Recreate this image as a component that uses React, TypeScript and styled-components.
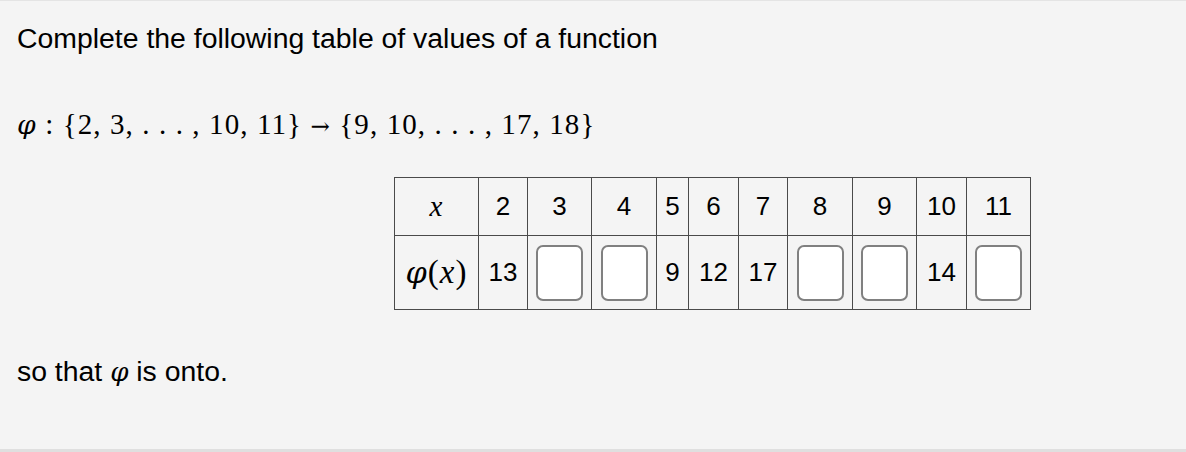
import React from 'react';
import styled, { createGlobalStyle } from 'styled-components';

const GlobalStyle = createGlobalStyle`
  html, body {
    margin: 0;
    padding: 0;
    background: #f4f4f4;
  }
`;

const Card = styled.div`
  box-sizing: border-box;
  height: 452px;
  background: #f4f4f4;
  border-top: 1px solid #e4e4e4;
  border-bottom: 3px solid #dfdfdf;
  padding: 20px 17px 0;
  color: #000;
  font-family: 'Liberation Sans', Arial, sans-serif;
`;

const Text = styled.p<{ $gap?: number }>`
  margin: ${(p) => p.$gap ?? 0}px 0 0;
  font-size: 28.4px;
  line-height: 34px;
`;

const MathLine = styled.div`
  margin-top: 52px;
  font-family: 'Liberation Serif', 'DejaVu Serif', serif;
  font-size: 29px;
  letter-spacing: 1.1px;
  line-height: 34px;
  white-space: pre;
`;

const Var = styled.span`
  font-family: 'Liberation Serif', 'DejaVu Serif', serif;
  font-style: italic;
`;

const Phi = styled.span`
  font-family: 'DejaVu Serif', serif;
  font-style: italic;
  font-size: 0.92em;
`;

const Arrow = styled.span`
  font-family: 'DejaVu Serif', serif;
  font-size: 0.8em;
`;

const Table = styled.table`
  margin: 34px 0 0 377px;
  border-collapse: collapse;
  table-layout: fixed;
  font-size: 26px;
`;

const Col = styled.col<{ $w: number }>`
  width: ${(p) => p.$w}px;
`;

const Cell = styled.td<{ $tall?: boolean }>`
  box-sizing: border-box;
  border: 1px solid #4a4a4a;
  padding: 0;
  text-align: center;
  vertical-align: middle;
  height: ${(p) => (p.$tall ? 74 : 58)}px;
`;

const HeadMath = styled.span<{ $size: number }>`
  font-family: 'Liberation Serif', 'DejaVu Serif', serif;
  font-size: ${(p) => p.$size}px;
  letter-spacing: 1px;
`;

const AnswerBox = styled.input`
  display: block;
  box-sizing: border-box;
  margin: 0 auto;
  width: 47px;
  height: 56px;
  border: 2px solid #808080;
  border-radius: 7px;
  background: #fff;
  outline: none;
`;

const xs = [2, 3, 4, 5, 6, 7, 8, 9, 10, 11];
const values: (number | null)[] = [13, null, null, 9, 12, 17, null, null, 14, null];
const widths = [84, 49, 64, 65, 32, 50, 49, 65, 64, 50, 64];

export default function App() {
  return (
    <>
      <GlobalStyle />
      <Card>
        <Text>Complete the following table of values of a function</Text>
        <MathLine>
          <Phi>φ</Phi>
          {' : {2, 3, . . . , 10, 11} '}
          <Arrow>→</Arrow>
          {' {9, 10, . . . , 17, 18}'}
        </MathLine>
        <Table>
          <colgroup>
            {widths.map((w, i) => (
              <Col key={i} $w={w} />
            ))}
          </colgroup>
          <tbody>
            <tr>
              <Cell>
                <HeadMath $size={29}>
                  <Var>x</Var>
                </HeadMath>
              </Cell>
              {xs.map((x) => (
                <Cell key={x}>{x}</Cell>
              ))}
            </tr>
            <tr>
              <Cell $tall>
                <HeadMath $size={33}>
                  <Phi>φ</Phi>(<Var>x</Var>)
                </HeadMath>
              </Cell>
              {values.map((v, i) => (
                <Cell $tall key={i}>
                  {v === null ? <AnswerBox type="text" aria-label={`value at ${xs[i]}`} /> : v}
                </Cell>
              ))}
            </tr>
          </tbody>
        </Table>
        <Text $gap={44}>
          so that <Phi>φ</Phi> is onto.
        </Text>
      </Card>
    </>
  );
}
